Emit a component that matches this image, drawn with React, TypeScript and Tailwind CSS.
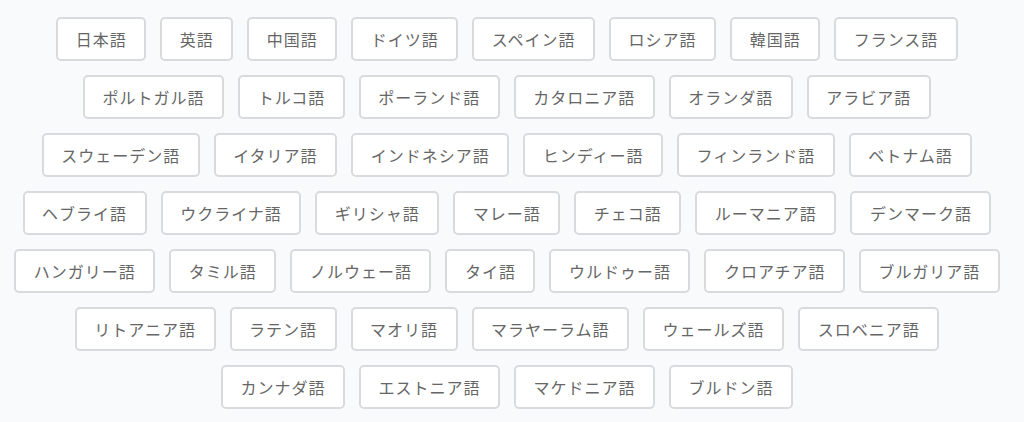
// App.tsx

const rows: string[][] = [
  ['日本語', '英語', '中国語', 'ドイツ語', 'スペイン語', 'ロシア語', '韓国語', 'フランス語'],
  ['ポルトガル語', 'トルコ語', 'ポーランド語', 'カタロニア語', 'オランダ語', 'アラビア語'],
  ['スウェーデン語', 'イタリア語', 'インドネシア語', 'ヒンディー語', 'フィンランド語', 'ベトナム語'],
  ['ヘブライ語', 'ウクライナ語', 'ギリシャ語', 'マレー語', 'チェコ語', 'ルーマニア語', 'デンマーク語'],
  ['ハンガリー語', 'タミル語', 'ノルウェー語', 'タイ語', 'ウルドゥー語', 'クロアチア語', 'ブルガリア語'],
  ['リトアニア語', 'ラテン語', 'マオリ語', 'マラヤーラム語', 'ウェールズ語', 'スロベニア語'],
  ['カンナダ語', 'エストニア語', 'マケドニア語', 'ブルドン語'],
]

function LangButton({ label }: { label: string }) {
  return (
    <button className="h-[44px] px-[17.5px] bg-white border-2 border-[#d8dadd] rounded-[5px] text-[16px] tracking-[1px] text-[#666666] leading-none whitespace-nowrap">
      {label}
    </button>
  )
}

export default function App() {
  return (
    <div
      className="min-h-[422px] w-[1024px] bg-[#f9fafc] pt-[17px] pr-[10px] flex flex-col gap-[14px]"
      style={{ fontFamily: '"Noto Sans CJK JP", "Noto Sans", sans-serif' }}
    >
      {rows.map((row, i) => (
        <div key={i} className="flex justify-center gap-[14px]">
          {row.map((lang) => (
            <LangButton key={lang} label={lang} />
          ))}
        </div>
      ))}
    </div>
  )
}
